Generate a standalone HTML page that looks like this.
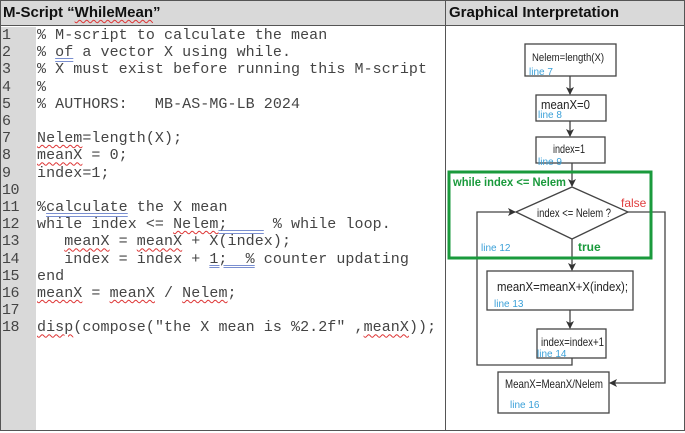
<!DOCTYPE html>
<html><head><meta charset="utf-8"><style>
body{margin:0;width:685px;height:433px;background:#fff;overflow:hidden;position:relative;font-family:"Liberation Sans",sans-serif}
.hdr{position:absolute;top:0;height:26px;background:#d9d9d9;border-bottom:1px solid #555;font-weight:bold;font-size:15px;line-height:26px;padding-left:3px;box-sizing:border-box;color:#111}
.gut{position:absolute;left:1px;top:27px;width:35px;height:403px;background:#d9d9d9}
.code{position:absolute;left:0;top:27px;font-family:"Liberation Mono",monospace;font-size:15px;line-height:17.2px;color:#444;white-space:pre;letter-spacing:0.07px}
.num{position:absolute;left:2px;top:27px;font-family:"Liberation Mono",monospace;font-size:15px;line-height:17.2px;color:#444;white-space:pre;letter-spacing:-0.5px}
.sq{text-decoration:underline wavy #d33;text-decoration-thickness:1px;text-underline-offset:2px}
.bl{text-decoration:underline double #7a8fd0;text-underline-offset:2px}
</style></head><body>
<div class="hdr" style="left:0;width:446px">M-Script “<span class="sq">WhileMean</span>”</div>
<div class="hdr" style="left:446px;width:239px">Graphical Interpretation</div>
<div class="gut"></div>
<div class="num">1
2
3
4
5
6
7
8
9
10
11
12
13
14
15
16
17
18</div>
<div class="code" style="left:37px">% M-script to calculate the mean
% <span class="bl">of</span> a vector X using while.
% X must exist before running this M-script
%
% AUTHORS:   MB-AS-MG-LB 2024

<span class="sq">Nelem</span>=length(X);
<span class="sq">meanX</span> = 0;
index=1;

%<span class="bl">calculate</span> the X mean
while index &lt;= <span class="sq">Nelem</span><span class="bl">;    </span> % while loop.
   <span class="sq">meanX</span> = <span class="sq">meanX</span> + X(index);
   index = index + <span class="bl">1;  %</span> counter updating
end
<span class="sq">meanX</span> = <span class="sq">meanX</span> / <span class="sq">Nelem</span>;

<span class="sq">disp</span>(compose("the X mean is %2.2f" ,<span class="sq">meanX</span>));</div>
<svg width="685" height="433" style="position:absolute;left:0;top:0" font-family="Liberation Sans, sans-serif">
<rect x="0.5" y="0.5" width="684" height="430" fill="none" stroke="#555"/>
<line x1="445.5" y1="0" x2="445.5" y2="431" stroke="#555"/>
<defs><marker id="a" markerWidth="8" markerHeight="8" refX="7" refY="4" orient="auto" markerUnits="userSpaceOnUse"><path d="M0,0 L8,4 L0,8 L2,4z" fill="#333"/></marker></defs>
<g stroke="#444" stroke-width="1.3" fill="#fff">
<rect x="525" y="44" width="91" height="32"/>
<rect x="536" y="95" width="70" height="26"/>
<rect x="536" y="137" width="69" height="26"/>
<polygon points="516,212 572,187 628,212 572,239"/>
<rect x="487" y="271" width="146" height="39"/>
<rect x="537" y="329" width="69" height="29"/>
<rect x="498" y="372" width="111" height="41"/>
</g>
<g stroke="#444" stroke-width="1.3" fill="none">
<line x1="570" y1="76" x2="570" y2="94" marker-end="url(#a)"/>
<line x1="570" y1="121" x2="570" y2="136" marker-end="url(#a)"/>
<line x1="572" y1="163" x2="572" y2="186" marker-end="url(#a)"/>
<line x1="572" y1="239" x2="572" y2="270" marker-end="url(#a)"/>
<line x1="570" y1="310" x2="570" y2="328" marker-end="url(#a)"/>
<polyline points="572,358 572,365 477,365 477,212 515,212" marker-end="url(#a)"/>
<polyline points="628,212 665,212 665,383 610,383" marker-end="url(#a)"/>
</g>
<rect x="449" y="172" width="202" height="86" fill="none" stroke="#1a9a3c" stroke-width="3"/>
<g font-size="11" fill="#222" lengthAdjust="spacingAndGlyphs">
<text x="532" y="61" textLength="72" lengthAdjust="spacingAndGlyphs">Nelem=length(X)</text>
<text x="541" y="109" font-size="13" textLength="49" lengthAdjust="spacingAndGlyphs">meanX=0</text>
<text x="553" y="153" font-size="12" textLength="32" lengthAdjust="spacingAndGlyphs">index=1</text>
<text x="537" y="217" font-size="12" textLength="74" lengthAdjust="spacingAndGlyphs">index &lt;= Nelem ?</text>
<text x="497" y="291" font-size="13" textLength="131" lengthAdjust="spacingAndGlyphs">meanX=meanX+X(index);</text>
<text x="541" y="346" font-size="12" textLength="63" lengthAdjust="spacingAndGlyphs">index=index+1</text>
<text x="505" y="388" font-size="12" textLength="98" lengthAdjust="spacingAndGlyphs">MeanX=MeanX/Nelem</text>
</g>
<g font-size="10" fill="#3aa0d8">
<text x="529" y="75">line 7</text>
<text x="538" y="118">line 8</text>
<text x="538" y="165">line 9</text>
<text x="481" y="251">line 12</text>
<text x="494" y="307">line 13</text>
<text x="537" y="357">line 14</text>
<text x="510" y="408">line 16</text>
</g>
<text x="453" y="186" font-size="12" font-weight="bold" fill="#1a9a3c" textLength="113" lengthAdjust="spacingAndGlyphs">while index &lt;= Nelem</text>
<text x="578" y="251" font-size="12" font-weight="bold" fill="#1a9a3c">true</text>
<text x="621" y="207" font-size="12" fill="#e04040">false</text>
</svg>
</body></html>
